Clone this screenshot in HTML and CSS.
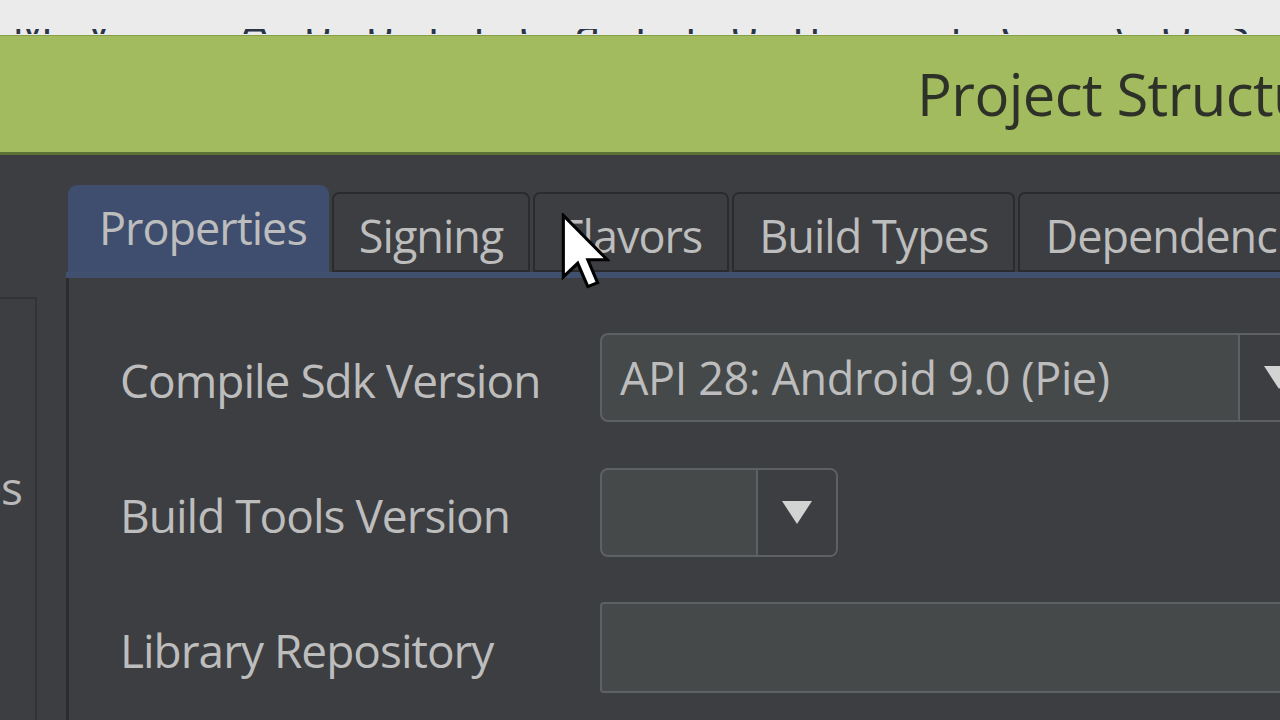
FILE: index.html
```html
<!DOCTYPE html>
<html lang="en">
<head>
<meta charset="utf-8">
<title>Project Structure</title>
<link rel="stylesheet" href="styles.css">
</head>
<body>
<div class="topstrip">
  <div class="peek"><span class="peek-text">My Application [C:\Users\dev\AndroidStudioProjects\MyApplication] - ...\app\build.gradle [app] - Android Studio</span></div>
</div>
<header class="titlebar">
  <h1 class="title">Project Structure</h1>
</header>
<main class="main">
  <aside class="sidebar">
    <div class="sidebox">
      <span class="side-item">Developer Services</span>
    </div>
  </aside>
  <section class="tabpane">
    <nav class="tabs">
      <div class="tab active">Properties</div>
      <div class="tab">Signing</div>
      <div class="tab">Flavors</div>
      <div class="tab">Build Types</div>
      <div class="tab">Dependencies</div>
    </nav>
    <div class="panel">
      <div class="form">
        <div class="label">Compile Sdk Version</div>
        <div class="combo combo-wide">
          <span class="combo-value">API 28: Android 9.0 (Pie)</span>
          <span class="combo-arrow"><span class="tri"></span></span>
        </div>
        <div class="label">Build Tools Version</div>
        <div class="combo combo-small">
          <span class="combo-value"></span>
          <span class="combo-arrow"><span class="tri"></span></span>
        </div>
        <div class="label">Library Repository</div>
        <div class="textfield"></div>
      </div>
    </div>
  </section>
</main>
<svg class="cursor" viewBox="0 0 12.6 20" width="49" height="78" aria-hidden="true">
  <path d="M0.6 0.6 L0.6 16.4 L4.3 12.9 L6.9 18.9 L9.4 17.9 L6.9 12 L11.9 12 Z" fill="#ffffff" stroke="#000000" stroke-width="0.8" stroke-linejoin="miter"/>
</svg>
</body>
</html>
```
FILE: styles.css
```css
html, body {
  margin: 0;
  padding: 0;
}
body {
  width: 1280px;
  height: 720px;
  overflow: hidden;
  background: #3c3e41;
  font-family: "Open Sans", "Noto Sans", "DejaVu Sans", sans-serif;
  position: relative;
}

/* light strip at the very top: only the very bottom of a window title peeks through */
.topstrip {
  height: 35px;
  background: #ebebeb;
  overflow: hidden;
  display: flex;
  flex-direction: column;
  justify-content: flex-end;
}
.peek {
  height: 5px;
  margin-bottom: 1px;
  overflow: hidden;
  position: relative;
}
.peek-text {
  position: absolute;
  left: 12px;
  bottom: -13px;
  font-size: 46px;
  line-height: 46px;
  white-space: nowrap;
  color: #2a3448;
  letter-spacing: 34px;
  word-spacing: 50px;
}

/* green dialog title bar */
.titlebar {
  height: 116px;
  background: #a2bb5e;
  border-top: 1px solid #86a048;
  border-bottom: 3px solid #5f7236;
  overflow: hidden;
}
.title {
  margin: 0;
  padding: 29px 0 0 917px;
  font-size: 58px;
  line-height: 58px;
  font-weight: 400;
  color: #2e3128;
  white-space: nowrap;
  letter-spacing: -0.6px;
}

/* main area */
.main {
  display: flex;
  height: 565px;
}
.sidebar {
  width: 66px;
  flex: none;
  padding-top: 142px;
  box-sizing: border-box;
}
.sidebox {
  width: 37px;
  height: 100%;
  box-sizing: border-box;
  border-top: 2px solid #323336;
  border-right: 2px solid #323336;
  overflow: hidden;
  display: flex;
  justify-content: flex-end;
  padding-top: 158px;
  padding-right: 13px;
}
.side-item {
  font-size: 46px;
  line-height: 60px;
  height: 60px;
  color: #b9b9b9;
  white-space: nowrap;
  letter-spacing: -1px;
}

.tabpane {
  flex: 1;
  min-width: 0;
  display: flex;
  flex-direction: column;
  padding-top: 30px;
}
.tabs {
  display: flex;
  align-items: flex-end;
  gap: 3px;
  padding-left: 2px;
  border-bottom: 6px solid #41506f;
  white-space: nowrap;
}
.tab {
  flex: none;
  box-sizing: border-box;
  height: 80px;
  padding: 7px 25px 0 25px;
  display: flex;
  align-items: center;
  font-size: 45px;
  letter-spacing: -1px;
  color: #bdbdbd;
  background: #3c3e41;
  border: 2px solid #2a2b2d;
  border-radius: 7px 7px 0 0;
}
.tab.active {
  height: 87px;
  padding: 0 22px 3px 31px;
  background: #3f4e6e;
  border: none;
  border-radius: 9px 9px 0 0;
}

.panel {
  flex: 1;
  border-left: 3px solid #2b2c2e;
  padding: 55px 0 0 51px;
}
.form {
  display: grid;
  grid-template-columns: 480px 720px;
  grid-auto-rows: 89px;
  row-gap: 46px;
  align-items: center;
}
.label {
  font-size: 46px;
  letter-spacing: -1px;
  color: #bdbdbd;
  white-space: nowrap;
  padding-top: 4px;
}

.combo {
  height: 89px;
  box-sizing: border-box;
  border: 2px solid #5e6163;
  border-radius: 8px;
  background: #45494a;
  display: flex;
  overflow: hidden;
}
.combo-wide {
  width: 720px;
}
.combo-small {
  width: 238px;
}
.combo-value {
  flex: 1;
  display: flex;
  align-items: center;
  padding-left: 18px;
  font-size: 45px;
  letter-spacing: -0.4px;
  color: #bdbdbd;
  white-space: nowrap;
}
.combo-arrow {
  width: 78px;
  flex: none;
  border-left: 2px solid #5e6163;
  background: #3c3e41;
  display: flex;
  align-items: center;
  justify-content: center;
}
.tri {
  width: 0;
  height: 0;
  border-left: 15px solid transparent;
  border-right: 15px solid transparent;
  border-top: 23px solid #d2d3d3;
}

.textfield {
  width: 720px;
  height: 91px;
  box-sizing: border-box;
  border: 2px solid #5e6163;
  border-radius: 4px;
  background: #45494a;
}

.cursor {
  position: absolute;
  left: 561px;
  top: 213px;
}
```
